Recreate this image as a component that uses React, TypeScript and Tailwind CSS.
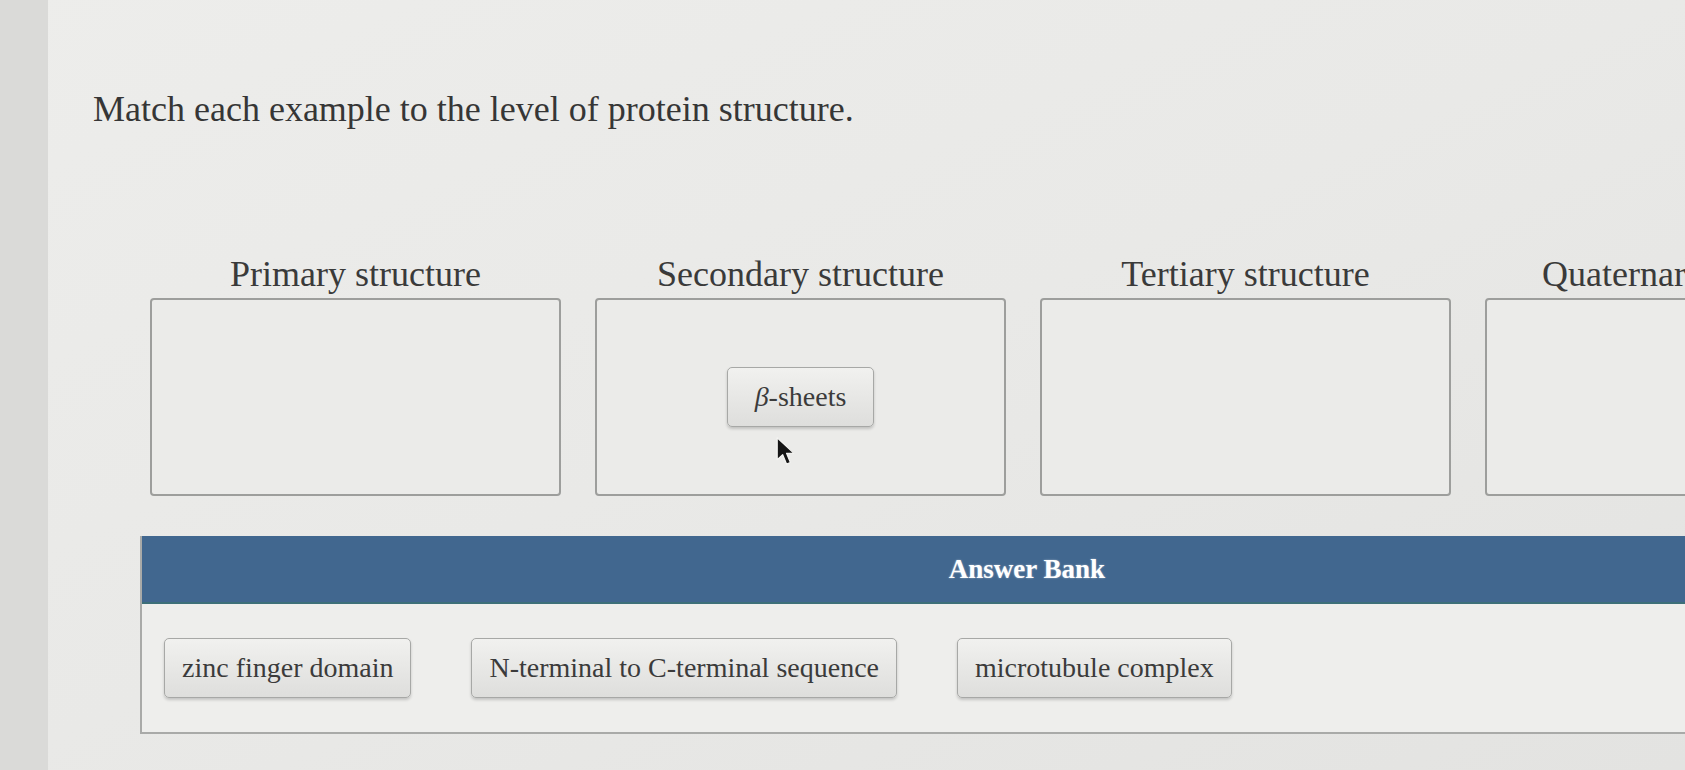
import React from "react";

const serif = { fontFamily: '"Liberation Serif", "Times New Roman", serif' };

type Column = { label: string; items: React.ReactNode[] };

const columns: Column[] = [
  { label: "Primary structure", items: [] },
  {
    label: "Secondary structure",
    items: [
      <>
        <i>β</i>-sheets
      </>,
    ],
  },
  { label: "Tertiary structure", items: [] },
  { label: "Quaternary structure", items: [] },
];

const bankItems = [
  "zinc finger domain",
  "N-terminal to C-terminal sequence",
  "microtubule complex",
];

function Chip({ children, wide }: { children: React.ReactNode; wide?: boolean }) {
  return (
    <div
      className={
        "flex h-[60px] items-center whitespace-nowrap rounded-[5px] border-[1.5px] border-[#a7a8a6] bg-gradient-to-b from-[#f1f1ef] to-[#dededc] text-[28px] leading-none text-[#3b3b3b] shadow-[0_2px_3px_rgba(0,0,0,0.18)] " +
        (wide ? "px-[27px]" : "px-[17px]")
      }
    >
      {children}
    </div>
  );
}

function Pointer() {
  return (
    <svg
      width="22"
      height="32"
      viewBox="0 0 20 28"
      className="absolute left-[178px] top-[136px]"
    >
      <path
        d="M2 1 L2 21 L7 16.5 L10.5 25 L14 23.5 L10.5 15.2 L17 15 Z"
        fill="#151515"
        stroke="#f4f4f2"
        strokeWidth="1.1"
        strokeLinejoin="round"
      />
    </svg>
  );
}

export default function App() {
  return (
    <div
      className="flex h-[770px] w-[1685px] overflow-hidden bg-gradient-to-br from-[#ededeb] via-[#e9e9e7] to-[#e3e3e1]"
      style={serif}
    >
      {/* side gutter */}
      <div className="w-[48px] shrink-0 bg-[#dadad8]" />

      <div className="flex shrink-0 flex-col pl-[45px]">
        <h1 className="pt-[91px] text-[36px] font-normal leading-[36px] text-[#363636]">
          Match each example to the level of protein structure.
        </h1>

        {/* drop targets */}
        <div className="ml-[57px] mt-[129px] grid w-[1746px] grid-cols-4 gap-x-[34px]">
          {columns.map((col, i) => (
            <div key={col.label} className="flex flex-col">
              <div className="whitespace-nowrap text-center text-[36px] leading-[36px] text-[#3a3a3a]">
                {col.label}
              </div>
              <div className="relative mt-[6px] flex h-[198px] items-center justify-center rounded-[4px] border-2 border-[#9d9e9c] bg-[#ebebe9]">
                {col.items.map((item, j) => (
                  <Chip key={j} wide>
                    {item}
                  </Chip>
                ))}
                {i === 1 && <Pointer />}
              </div>
            </div>
          ))}
        </div>

        {/* answer bank */}
        <div className="ml-[47px] mt-[40px] w-[1772px] border-b-2 border-l-2 border-[#a9aaa8]">
          <div className="flex h-[68px] items-center justify-center border-b-2 border-[#3d6f78] bg-[#41678f]">
            <span className="text-[27px] font-bold text-white [text-shadow:0_0_2px_rgba(255,255,255,0.5)]">
              Answer Bank
            </span>
          </div>
          <div className="flex items-center gap-[60px] bg-[#eeeeec] px-[22px] py-[34px]">
            {bankItems.map((t) => (
              <Chip key={t}>{t}</Chip>
            ))}
          </div>
        </div>
      </div>
    </div>
  );
}
